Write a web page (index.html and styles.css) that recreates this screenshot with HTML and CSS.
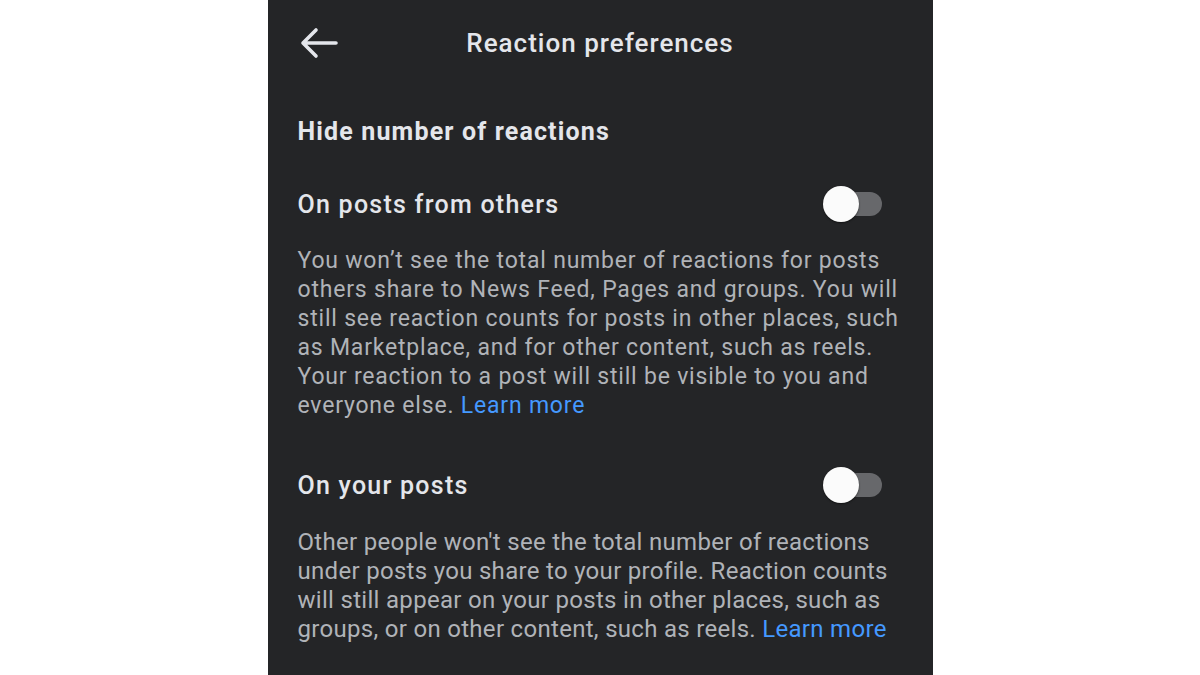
FILE: index.html
```html
<!DOCTYPE html>
<html>
<head>
<meta charset="utf-8">
<title>Reaction preferences</title>
<link rel="stylesheet" href="styles.css">
</head>
<body>
	<div class="screen">
		<div class="topbar">
			<a href="#" class="back">
				<svg width="40" height="32" viewBox="0 0 40 32"><path d="M37 16H4M17 3L4 16l13 13" fill="none" stroke="#e4e6eb" stroke-width="3.6" stroke-linecap="round" stroke-linejoin="round"/></svg>
			</a>
			<h1>Reaction preferences</h1>
		</div>

		<h2 class="group">Hide number of reactions</h2>

		<div class="setting">
			<div class="row">
				<h3>On posts from others</h3>
				<span class="toggle"><i></i></span>
			</div>
			<p>You won’t see the total number of reactions for posts others share to News Feed, Pages and groups. You will still see reaction counts for posts in other places, such as Marketplace, and for other content, such as reels. Your reaction to a post will still be visible to you and everyone else. <a href="#">Learn more</a></p>
		</div>

		<div class="setting narrow">
			<div class="row">
				<h3>On your posts</h3>
				<span class="toggle"><i></i></span>
			</div>
			<p>Other people won't see the total number of reactions under posts you share to your profile. Reaction counts will still appear on your posts in other places, such as groups, or on other content, such as reels. <a href="#">Learn more</a></p>
		</div>
	</div>
</body>
</html>
```

FILE: styles.css
```css
* {
	margin: 0;
	padding: 0;
}

body {
	background: #fff;
	font-family: Roboto, "Noto Sans", sans-serif;
}

.screen {
	width: 665px;
	height: 675px;
	margin: 0 auto;
	background: #242527;
	color: #e4e6eb;
	overflow: hidden;
}

/**** top bar ****/
.topbar {
	position: relative;
	height: 86px;
	display: flex;
	align-items: center;
	justify-content: center;
}

.topbar .back {
	position: absolute;
	left: 31px;
	top: 27px;
	display: block;
	height: 32px;
}

.topbar h1 {
	font-size: 26px;
	font-weight: 500;
	letter-spacing: 1px;
}

/**** settings ****/
.group {
	padding: 28px 30px 0;
	font-size: 25px;
	font-weight: 700;
	line-height: 36px;
	letter-spacing: 1.15px;
}

.setting {
	padding: 0 30px;
}

.setting .row {
	display: flex;
	align-items: center;
	justify-content: space-between;
	height: 40px;
	margin-top: 34px;
}

.setting h3 {
	font-size: 25px;
	font-weight: 500;
	letter-spacing: 1.25px;
}

.setting p {
	margin-top: 22px;
	font-size: 23px;
	line-height: 29px;
	letter-spacing: 0.8px;
	color: #b0b3b8;
}

.setting p a {
	color: #4599ff;
	text-decoration: none;
}

.narrow .row {
	margin-top: 45px;
}

.narrow p {
	margin-top: 23px;
	font-size: 24px;
	letter-spacing: 0.3px;
	padding-right: 4px;
}

.toggle {
	position: relative;
	width: 58px;
	height: 24px;
	margin-right: 21px;
	border-radius: 12px;
	background: #67686b;
}

.toggle i {
	position: absolute;
	left: -1px;
	top: -6px;
	width: 36px;
	height: 36px;
	border-radius: 50%;
	background: #fbfbfb;
	box-shadow: 0 1px 2px rgba(0, 0, 0, 0.5);
}
```
